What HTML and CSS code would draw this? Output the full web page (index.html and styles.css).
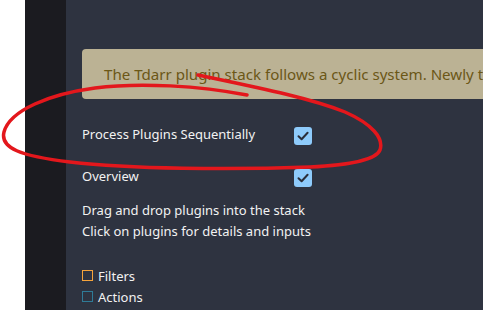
FILE: index.html
```html
<!DOCTYPE html>
<html>
<head>
<meta charset="utf-8">
<link rel="stylesheet" href="styles.css">
</head>
<body>
<div class="page">
  <div class="gutter"></div>
  <div class="sidebar"></div>
  <main class="main">
    <div class="banner">The Tdarr plugin stack follows a cyclic system. Newly transcoded files are put back into the stack</div>
    <div class="row row-first">
      <span class="label">Process Plugins Sequentially</span>
      <span class="check"><svg viewBox="0 0 18 18" width="18" height="18"><path d="M4.5 9.2 L7.6 12.2 L13.6 5.8" fill="none" stroke="#2a2e39" stroke-width="2" stroke-linecap="round" stroke-linejoin="round"/></svg></span>
    </div>
    <div class="row">
      <span class="label">Overview</span>
      <span class="check"><svg viewBox="0 0 18 18" width="18" height="18"><path d="M4.5 9.2 L7.6 12.2 L13.6 5.8" fill="none" stroke="#2a2e39" stroke-width="2" stroke-linecap="round" stroke-linejoin="round"/></svg></span>
    </div>
    <div class="help">
      <p>Drag and drop plugins into the stack</p>
      <p>Click on plugins for details and inputs</p>
    </div>
    <ul class="legend">
      <li><span class="sq sq-filter"></span>Filters</li>
      <li><span class="sq sq-action"></span>Actions</li>
    </ul>
  </main>
</div>
<svg class="annot" viewBox="0 0 483 310" width="483" height="310">
  <path d="M247 95 C 200 86, 140 82, 95 88 C 50 94, 10 110, 4 132 C 0 148, 20 156, 70 162 C 130 169, 230 170, 310 167 C 350 165, 376 160, 380 150 C 384 138, 372 124, 345 112 C 310 98, 260 88, 198 75" fill="none" stroke="#e3171c" stroke-width="3.5" stroke-linecap="round" stroke-linejoin="round"/>
</svg>
</body>
</html>
```
FILE: styles.css
```css
html, body {
  margin: 0;
  padding: 0;
  width: 483px;
  height: 310px;
  overflow: hidden;
  background: #ffffff;
  font-family: "Noto Sans", "Open Sans", sans-serif;
}
.page {
  display: flex;
  height: 310px;
}
.gutter {
  width: 25px;
  flex: none;
  background: #ffffff;
}
.sidebar {
  width: 41px;
  flex: none;
  background: #1b1b20;
}
.main {
  flex: 1;
  min-width: 0;
  overflow: hidden;
  background: #2e3340;
  padding: 49px 0 0 16px;
  color: #f2f2f2;
}
.banner {
  box-sizing: border-box;
  width: 900px;
  height: 50px;
  background: #bbb294;
  border-radius: 4px;
  color: #6b5717;
  font-size: 15.1px;
  line-height: 50px;
  padding-left: 22px;
  white-space: nowrap;
}
.row {
  display: flex;
  align-items: flex-start;
  height: 18px;
  margin-top: 24px;
  font-size: 13px;
}
.row-first {
  margin-top: 28px;
}
.label {
  width: 212px;
  flex: none;
  line-height: 14px;
}
.check {
  width: 18px;
  height: 18px;
  border-radius: 3px;
  background: #8ecbfb;
  display: block;
}
.check svg {
  display: block;
}
.help {
  margin-top: 13px;
  font-size: 13px;
}
.help p {
  margin: 0;
  line-height: 21px;
}
.legend {
  list-style: none;
  margin: 23px 0 0;
  padding: 0;
  font-size: 13px;
}
.legend li {
  display: flex;
  align-items: center;
  height: 21px;
}
.sq {
  box-sizing: border-box;
  width: 11px;
  height: 11px;
  margin-right: 5px;
  border: 1.5px solid;
}
.sq-filter {
  border-color: #f6a43c;
}
.sq-action {
  border-color: #2f7b97;
}
.annot {
  position: absolute;
  left: 0;
  top: 0;
  pointer-events: none;
}
```
